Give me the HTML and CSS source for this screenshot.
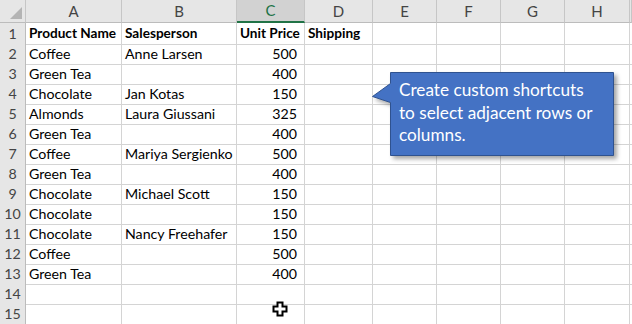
FILE: index.html
```html
<!DOCTYPE html>
<html>
<head>
<meta charset="utf-8">
<title>Sheet1</title>
<link rel="stylesheet" href="styles.css">
</head>
<body>
<div class="sheet">
  <div class="row head">
    <div class="corner"><span class="tri"></span></div>
    <div class="col">A</div><div class="col">B</div><div class="col sel">C</div><div class="col">D</div>
    <div class="col">E</div><div class="col">F</div><div class="col">G</div><div class="col">H</div><div class="col"></div>
  </div>
  <div class="row bold">
    <div class="num">1</div>
    <div class="cell">Product Name</div><div class="cell">Salesperson</div><div class="cell">Unit Price</div><div class="cell">Shipping</div>
    <div class="cell"></div><div class="cell"></div><div class="cell"></div><div class="cell"></div><div class="cell"></div>
  </div>
  <div class="row">
    <div class="num">2</div>
    <div class="cell">Coffee</div><div class="cell">Anne Larsen</div><div class="cell r">500</div><div class="cell"></div>
    <div class="cell"></div><div class="cell"></div><div class="cell"></div><div class="cell"></div><div class="cell"></div>
  </div>
  <div class="row">
    <div class="num">3</div>
    <div class="cell">Green Tea</div><div class="cell"></div><div class="cell r">400</div><div class="cell"></div>
    <div class="cell"></div><div class="cell"></div><div class="cell"></div><div class="cell"></div><div class="cell"></div>
  </div>
  <div class="row">
    <div class="num">4</div>
    <div class="cell">Chocolate</div><div class="cell">Jan Kotas</div><div class="cell r">150</div><div class="cell"></div>
    <div class="cell"></div><div class="cell"></div><div class="cell"></div><div class="cell"></div><div class="cell"></div>
  </div>
  <div class="row">
    <div class="num">5</div>
    <div class="cell">Almonds</div><div class="cell">Laura Giussani</div><div class="cell r">325</div><div class="cell"></div>
    <div class="cell"></div><div class="cell"></div><div class="cell"></div><div class="cell"></div><div class="cell"></div>
  </div>
  <div class="row">
    <div class="num">6</div>
    <div class="cell">Green Tea</div><div class="cell"></div><div class="cell r">400</div><div class="cell"></div>
    <div class="cell"></div><div class="cell"></div><div class="cell"></div><div class="cell"></div><div class="cell"></div>
  </div>
  <div class="row">
    <div class="num">7</div>
    <div class="cell">Coffee</div><div class="cell">Mariya Sergienko</div><div class="cell r">500</div><div class="cell"></div>
    <div class="cell"></div><div class="cell"></div><div class="cell"></div><div class="cell"></div><div class="cell"></div>
  </div>
  <div class="row">
    <div class="num">8</div>
    <div class="cell">Green Tea</div><div class="cell"></div><div class="cell r">400</div><div class="cell"></div>
    <div class="cell"></div><div class="cell"></div><div class="cell"></div><div class="cell"></div><div class="cell"></div>
  </div>
  <div class="row">
    <div class="num">9</div>
    <div class="cell">Chocolate</div><div class="cell">Michael Scott</div><div class="cell r">150</div><div class="cell"></div>
    <div class="cell"></div><div class="cell"></div><div class="cell"></div><div class="cell"></div><div class="cell"></div>
  </div>
  <div class="row">
    <div class="num">10</div>
    <div class="cell">Chocolate</div><div class="cell"></div><div class="cell r">150</div><div class="cell"></div>
    <div class="cell"></div><div class="cell"></div><div class="cell"></div><div class="cell"></div><div class="cell"></div>
  </div>
  <div class="row">
    <div class="num">11</div>
    <div class="cell">Chocolate</div><div class="cell">Nancy Freehafer</div><div class="cell r">150</div><div class="cell"></div>
    <div class="cell"></div><div class="cell"></div><div class="cell"></div><div class="cell"></div><div class="cell"></div>
  </div>
  <div class="row">
    <div class="num">12</div>
    <div class="cell">Coffee</div><div class="cell"></div><div class="cell r">500</div><div class="cell"></div>
    <div class="cell"></div><div class="cell"></div><div class="cell"></div><div class="cell"></div><div class="cell"></div>
  </div>
  <div class="row">
    <div class="num">13</div>
    <div class="cell">Green Tea</div><div class="cell"></div><div class="cell r">400</div><div class="cell"></div>
    <div class="cell"></div><div class="cell"></div><div class="cell"></div><div class="cell"></div><div class="cell"></div>
  </div>
  <div class="row">
    <div class="num">14</div>
    <div class="cell"></div><div class="cell"></div><div class="cell"></div><div class="cell"></div>
    <div class="cell"></div><div class="cell"></div><div class="cell"></div><div class="cell"></div><div class="cell"></div>
  </div>
  <div class="row">
    <div class="num">15</div>
    <div class="cell"></div><div class="cell"></div><div class="cell"></div><div class="cell"></div>
    <div class="cell"></div><div class="cell"></div><div class="cell"></div><div class="cell"></div><div class="cell"></div>
  </div>

  <div class="callout">
    <svg class="callout-shape" width="250" height="92" viewBox="0 0 250 92">
      <path d="M19.5 1.5 H242.5 V84.5 H19.5 V31.5 L1.5 25.5 L19.5 12.5 Z" fill="#4472c4" stroke="#2f528f" stroke-width="1"/>
    </svg>
    <div class="callout-text">Create custom shortcuts<br>to select adjacent rows or<br>columns.</div>
  </div>

  <svg class="cursor" width="16" height="16" viewBox="0 0 16 16">
    <path d="M5.5 1.5 H10.5 V5.5 H14.5 V10.5 H10.5 V14.5 H5.5 V10.5 H1.5 V5.5 H5.5 Z" fill="#fff" stroke="#000" stroke-width="2"/>
  </svg>
</div>
</body>
</html>
```

FILE: styles.css
```css
html,body{margin:0;padding:0;background:#fff;}
body{font-family:Lato,"Liberation Sans",sans-serif;font-size:14.2px;color:#000;overflow:hidden;}

.sheet{position:relative;width:632px;height:324px;}
.row{display:grid;grid-template-columns:26px 96px 115px 68px 68px 64px 64px 64px 65px 1fr;height:20px;}
.row > div{box-sizing:border-box;border-right:1px solid #d4d4d4;border-bottom:1px solid #d4d4d4;white-space:nowrap;overflow:visible;line-height:21px;}

.row.head{height:23px;}
.row.head > div{background:#e6e6e6;border-right-color:#c6c6c6;border-bottom-color:#bcbcbc;line-height:22px;text-align:center;color:#444;font-size:15px;}
.row.head > .col.sel{background:#d2d2d2;color:#217346;border-bottom:2px solid #217346;line-height:21px;}
.corner{position:relative;}
.tri{position:absolute;right:3px;bottom:3px;width:0;height:0;border-left:12px solid transparent;border-bottom:12px solid #b4b4b4;}

.row > .num{background:#e6e6e6;border-right-color:#bcbcbc;border-bottom-color:#c6c6c6;text-align:center;color:#444;}
.cell{padding-left:3px;}
.cell.r{text-align:right;padding-right:7px;}
.row.bold .cell{font-weight:bold;font-size:13.6px;}

.callout{position:absolute;left:371px;top:71px;width:250px;height:92px;}
.callout-shape{position:absolute;left:0;top:0;filter:drop-shadow(3px 3px 2px rgba(0,0,0,0.35));}
.callout-text{position:relative;padding:8px 20px 0 28px;white-space:nowrap;color:#fff;font-size:17.2px;line-height:22.5px;}

.cursor{position:absolute;left:272px;top:301px;}
```
